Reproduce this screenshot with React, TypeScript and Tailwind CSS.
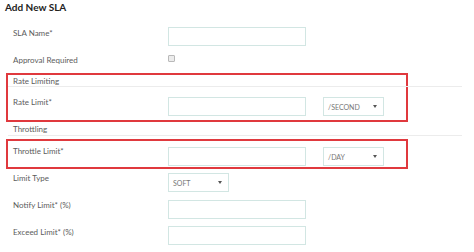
import React from "react";

const label = "w-[155px] shrink-0 text-[8px] leading-[12px] text-[#5c5c5c]";
const box = "border border-[#d2e6e3] bg-white";

function Caret() {
  return (
    <svg width="4" height="3" viewBox="0 0 4 3" className="shrink-0">
      <path d="M0 0 H4 L2 3 Z" fill="#555" />
    </svg>
  );
}

function Select({ value, width }: { value: string; width: string }) {
  return (
    <div className={`${box} ${width} h-[19px] flex items-center justify-between pl-[4px] pr-[6px]`}>
      <span className="text-[7px] leading-[10px] text-[#777]">{value}</span>
      <Caret />
    </div>
  );
}

function Input() {
  return <div className={`${box} w-[138px] h-[19px] shrink-0`} />;
}

export default function App() {
  return (
    <div
      className="w-[474px] h-[252px] bg-white overflow-hidden pl-[6px] flex flex-col"
      style={{ fontFamily: "Lato, 'Liberation Sans', sans-serif" }}
    >
      <div className="-ml-px mt-[1px] text-[10px] leading-[12px] font-bold text-[#222]">Add New SLA</div>

      {/* SLA name */}
      <div className="mt-[14px] pl-[7px] flex items-start">
        <div className={label}>SLA Name*</div>
        <Input />
      </div>

      {/* approval */}
      <div className="mt-[8px] pl-[7px] flex items-start">
        <div className={label}>Approval Required</div>
        <div className="mt-[1px] w-[7px] h-[7px] border border-[#b9b9b9] bg-[#ececec] rounded-[1px]" />
      </div>

      {/* rate limiting */}
      <div className="mt-[7px] w-[402px] border-2 border-[#e0393e] flex flex-col pb-[4px]">
        <div className="pl-[5px] h-[11px] text-[8px] leading-[12px] text-[#5c5c5c]">Rate Limiting</div>
        <div className="h-px w-[454px] bg-[#ececec]" />
        <div className="mt-[10px] pl-[5px] flex items-start">
          <div className={`${label} -mt-px`}>Rate Limit*</div>
          <Input />
          <div className="ml-[17px]">
            <Select value="/SECOND" width="w-[61px]" />
          </div>
        </div>
      </div>

      {/* throttling */}
      <div className="mt-[1px] pl-[7px] h-[12px] text-[8px] leading-[12px] text-[#5c5c5c]">Throttling</div>
      <div className="ml-[2px] h-px w-[454px] bg-[#ececec]" />

      <div className="mt-[3px] w-[402px] border-2 border-[#e0393e] pt-[6px] pb-[1px]">
        <div className="pl-[5px] flex items-start">
          <div className={`${label} -mt-[2px]`}>Throttle Limit*</div>
          <Input />
          <div className="ml-[17px]">
            <Select value="/DAY" width="w-[61px]" />
          </div>
        </div>
      </div>

      {/* limit type */}
      <div className="mt-[3px] pl-[7px] flex items-start">
        <div className={label}>Limit Type</div>
        <div className="mt-[1px]">
          <Select value="SOFT" width="w-[61px]" />
        </div>
      </div>

      <div className="mt-[7px] pl-[7px] flex items-start">
        <div className={label}>Notify Limit* (%)</div>
        <div className="mt-[1px]">
          <Input />
        </div>
      </div>

      <div className="mt-[7px] pl-[7px] flex items-start">
        <div className={label}>Exceed Limit* (%)</div>
        <Input />
      </div>
    </div>
  );
}
